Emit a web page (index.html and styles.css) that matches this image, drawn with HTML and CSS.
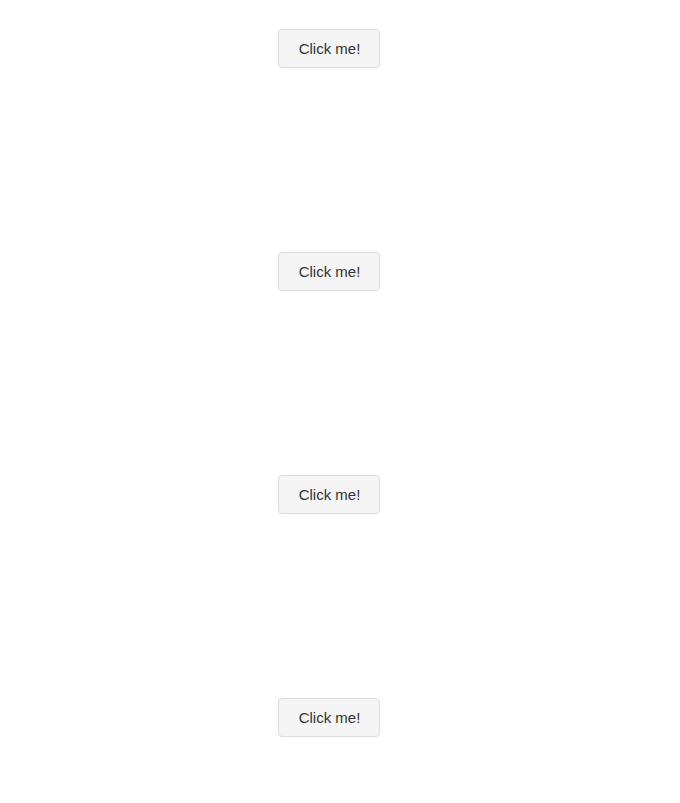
FILE: index.html
```html
<!DOCTYPE html>
<html>
<head>
<meta charset="utf-8">
<link rel="stylesheet" href="styles.css">
</head>
<body>
<div class="stack">
  <button class="btn">Click me!</button>
  <button class="btn">Click me!</button>
  <button class="btn">Click me!</button>
  <button class="btn">Click me!</button>
</div>
</body>
</html>
```
FILE: styles.css
```css
html, body {
  margin: 0;
  padding: 0;
  background: #fff;
}
.stack {
  display: flex;
  flex-direction: column;
  align-items: flex-start;
  gap: 184px;
  padding: 29px 0 0 278px;
}
.btn {
  box-sizing: border-box;
  width: 102px;
  height: 39px;
  padding: 0 0 0 1px;
  margin: 0;
  border: 1px solid #dcdcdc;
  border-radius: 4px;
  background: #f5f5f5;
  color: #333;
  font-family: "Liberation Sans", Arial, sans-serif;
  font-size: 15px;
  line-height: 20px;
  text-align: center;
}
```
